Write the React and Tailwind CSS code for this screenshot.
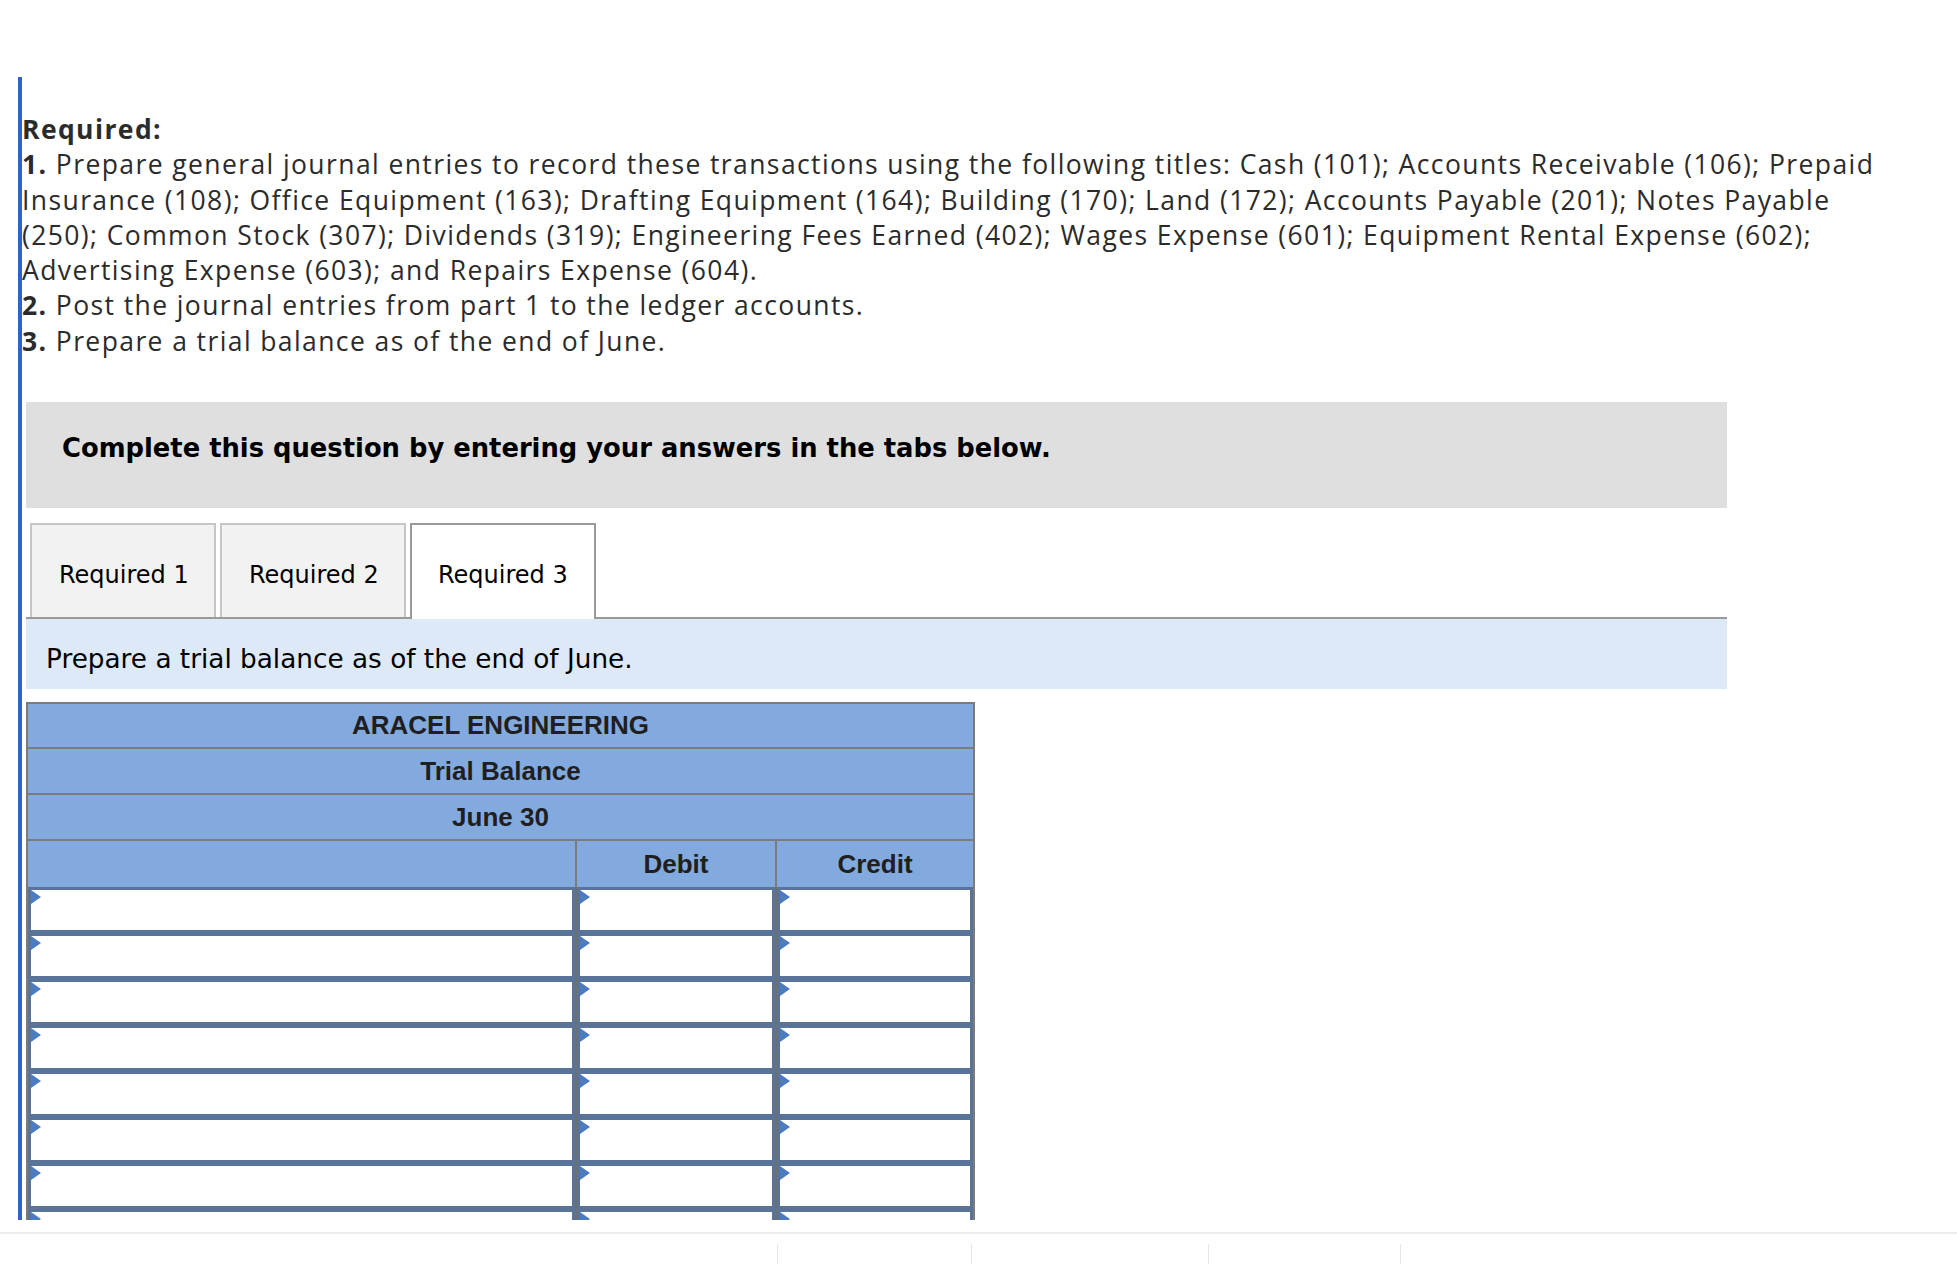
import React from 'react';

const accounts =
  'Prepare general journal entries to record these transactions using the following titles: Cash (101); Accounts Receivable (106); Prepaid Insurance (108); Office Equipment (163); Drafting Equipment (164); Building (170); Land (172); Accounts Payable (201); Notes Payable (250); Common Stock (307); Dividends (319); Engineering Fees Earned (402); Wages Expense (601); Equipment Rental Expense (602); Advertising Expense (603); and Repairs Expense (604).';

const tabs = ['Required 1', 'Required 2', 'Required 3'];
const rows = Array.from({ length: 10 });

const Marker = () => (
  <span className="absolute left-0 top-0 w-0 h-0 border-y-[7px] border-y-transparent border-l-[10px] border-l-[#4a7bc3]" />
);

const InputCell = ({ divider }) => (
  <div className={`h-full ${divider ? 'border-l-2 border-[#6e6e6e]' : ''}`}>
    <div className="relative h-full border-[3px] border-[#5a7398] bg-white">
      <Marker />
    </div>
  </div>
);

const App = () => {
  const active = 2;

  return (
    <div className="w-full h-[1264px] overflow-hidden bg-white text-[#2b2b2b]">
      <div className="pt-[77px]">
        {/* question panel, clipped like the scroll area */}
        <div className="ml-[18px] w-[1882px] h-[1143px] overflow-hidden border-l-4 border-[#2e63c9]">
          <div className="pt-[35px] text-[26.5px] leading-[35.3px] tracking-[1.4px] font-['Open_Sans','Liberation_Sans',sans-serif]">
            <p className="font-bold">Required:</p>
            <p>
              <span className="font-bold">1.</span> {accounts}
            </p>
            <p>
              <span className="font-bold">2.</span> Post the journal entries from part 1 to the ledger accounts.
            </p>
            <p>
              <span className="font-bold">3.</span> Prepare a trial balance as of the end of June.
            </p>
          </div>

          <div className="ml-[4px] mt-[43px] w-[1701px] h-[106px] bg-[#dfdfdf] pl-[36px] pt-[27px]">
            <p className="text-[25.8px] font-bold text-black font-['DejaVu_Sans',sans-serif]">
              Complete this question by entering your answers in the tabs below.
            </p>
          </div>

          <div className="ml-[4px] mt-[15px] w-[1701px] border-b-2 border-[#9a9a9a] flex gap-[4px] pl-[4px] font-['DejaVu_Sans',sans-serif]">
            {tabs.map((t, i) => (
              <div
                key={t}
                className={
                  i === active
                    ? 'w-[186px] h-[96px] -mb-[2px] border-2 border-b-0 border-[#9a9a9a] bg-white pl-[26px] pt-[32px] text-[24px] text-black'
                    : 'w-[186px] h-[94px] border-2 border-b-0 border-[#c6c6c6] bg-[#f2f2f2] pl-[27px] pt-[32px] text-[24px] text-black'
                }
              >
                {t}
              </div>
            ))}
          </div>

          <div className="ml-[4px] w-[1701px] h-[70px] bg-[#dde9f7] pl-[20px] pt-[21px]">
            <p className="text-[26.3px] text-black font-['DejaVu_Sans',sans-serif]">
              Prepare a trial balance as of the end of June.
            </p>
          </div>

          {/* trial balance */}
          <div className="ml-[4px] mt-[13px] w-[949px] border-2 border-[#7b7b7b] text-[26px] font-bold text-[#1f1f1f] font-['Liberation_Sans',Arial,sans-serif]">
            <div className="h-[45px] flex items-center justify-center bg-[#82aadf] border-b-2 border-[#7b7b7b]">ARACEL ENGINEERING</div>
            <div className="h-[46px] flex items-center justify-center bg-[#82aadf] border-b-2 border-[#7b7b7b]">Trial Balance</div>
            <div className="h-[46px] flex items-center justify-center bg-[#82aadf] border-b-2 border-[#7b7b7b]">June 30</div>
            <div className="h-[46px] grid grid-cols-[547px_200px_1fr] bg-[#82aadf]">
              <div />
              <div className="flex items-center justify-center border-l-2 border-[#7b7b7b]">Debit</div>
              <div className="flex items-center justify-center border-l-2 border-[#7b7b7b]">Credit</div>
            </div>
            {rows.map((_, i) => (
              <div key={i} className="h-[46px] grid grid-cols-[547px_200px_1fr]">
                <InputCell />
                <InputCell divider />
                <InputCell divider />
              </div>
            ))}
          </div>
        </div>

        {/* footer strip */}
        <div className="mt-[12px] border-t-2 border-[#ececec] pt-[10px]">
          <div className="flex pl-[777px] h-[30px]">
            <div className="w-[194px] border-l border-[#e6e6e6]" />
            <div className="w-[237px] border-l border-[#e6e6e6]" />
            <div className="w-[193px] border-x border-[#e6e6e6]" />
          </div>
        </div>
      </div>
    </div>
  );
};

export default App;
